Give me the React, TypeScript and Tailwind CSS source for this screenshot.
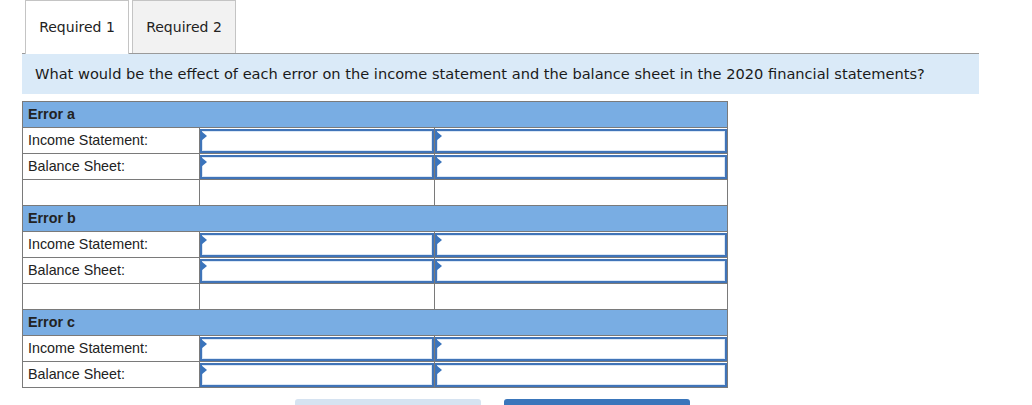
import React from 'react';

const sections = ['Error a', 'Error b', 'Error c'];

function InputCell() {
  return (
    <td className="border border-[#7a7a7a] p-0 h-[26px]">
      <div className="relative h-[24px] border-2 border-[#4074b8] bg-white">
        <div className="absolute inset-0 border border-[#dbe7f5]" />
        <div className="absolute left-[-1px] top-[0px] w-0 h-0 border-y-[5px] border-y-transparent border-l-[6px] border-l-[#3a74bc]" />
      </div>
    </td>
  );
}

export default function App() {
  return (
    <div className="w-[1032px] h-[405px] overflow-hidden bg-white" style={{ fontFamily: 'Verdana, "DejaVu Sans", sans-serif' }}>
      <div className="ml-[22px] w-[957px]">
        {/* Tabs */}
        <div className="flex h-[54px] border-b border-[#9a9a9a] pl-[3px] gap-[3px]">
          <div className="w-[104px] h-[54px] border border-b-0 border-[#c4c4c4] bg-white flex items-center justify-center text-[14px] text-[#222] -mb-px">
            Required 1
          </div>
          <div className="w-[104px] h-[53px] border border-b-0 border-[#c4c4c4] bg-[#f2f2f2] flex items-center justify-center text-[14px] text-[#222]">
            Required 2
          </div>
        </div>

        {/* Question */}
        <div className="h-[40px] bg-[#daeaf8] flex items-center pl-[13px] text-[14.6px] text-[#1a1a1a]">
          What would be the effect of each error on the income statement and the balance sheet in the 2020 financial statements?
        </div>

        {/* Table */}
        <table className="mt-[7px] border-collapse border border-[#7a7a7a] table-fixed w-[705px]" style={{ fontFamily: '"Liberation Sans", Arial, sans-serif' }}>
          <colgroup>
            <col className="w-[177px]" />
            <col className="w-[235px]" />
            <col className="w-[293px]" />
          </colgroup>
          <tbody>
            {sections.map((s, i) => (
              <React.Fragment key={s}>
                <tr className="h-[26px] bg-[#79ade3]">
                  <td colSpan={3} className="border border-[#7a7a7a] px-[5px] text-[14.3px] font-bold text-[#222]">
                    {s}
                  </td>
                </tr>
                <tr className="h-[26px]">
                  <td className="border border-[#7a7a7a] px-[5px] text-[14.3px] text-[#222]">Income Statement:</td>
                  <InputCell />
                  <InputCell />
                </tr>
                <tr className="h-[26px]">
                  <td className="border border-[#7a7a7a] px-[5px] text-[14.3px] text-[#222]">Balance Sheet:</td>
                  <InputCell />
                  <InputCell />
                </tr>
                {i < sections.length - 1 && (
                  <tr className="h-[26px]">
                    <td className="border border-[#7a7a7a]" />
                    <td className="border border-[#7a7a7a]" />
                    <td className="border border-[#7a7a7a]" />
                  </tr>
                )}
              </React.Fragment>
            ))}
          </tbody>
        </table>

        {/* Buttons */}
        <div className="flex gap-[23px] ml-[273px] mt-[11px]">
          <div className="w-[186px] h-[30px] rounded-[3px] bg-[#d6e3f1]" />
          <div className="w-[186px] h-[30px] rounded-[3px] bg-[#3a76bb]" />
        </div>
      </div>
    </div>
  );
}
